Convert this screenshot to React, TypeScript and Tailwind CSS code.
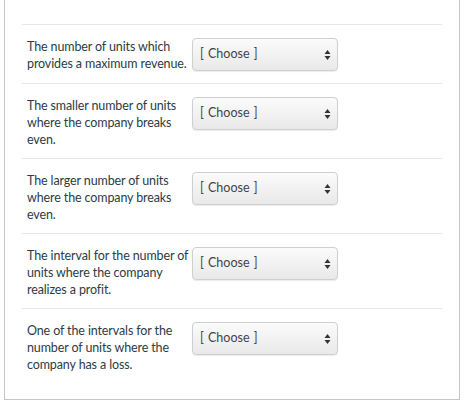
const rows = [
  "The number of units which provides a maximum revenue.",
  "The smaller number of units where the company breaks even.",
  "The larger number of units where the company breaks even.",
  "The interval for the number of units where the company realizes a profit.",
  "One of the intervals for the number of units where the company has a loss.",
];

function ChooseSelect() {
  return (
    <div className="relative mb-[2px] flex h-[33px] w-[146px] shrink-0 items-center rounded-[4px] border border-[#cfcfcf] bg-gradient-to-b from-[#fbfbfb] to-[#e9e9e9] pl-[7px] text-[12.5px] text-[#444] shadow-[0_1px_1px_rgba(0,0,0,0.08)] [word-spacing:1px]">
      <span>[ Choose ]</span>
      <svg className="absolute right-[6px] top-1/2 -translate-y-1/2" width="7" height="11" viewBox="0 0 7 11">
        <path d="M3.5 0.5 L6.5 4.5 H0.5 Z" fill="#333" />
        <path d="M3.5 10.5 L6.5 6.5 H0.5 Z" fill="#333" />
      </svg>
    </div>
  );
}

export default function App() {
  return (
    <div className="h-[403px] w-[474px] bg-white font-['Lato','Liberation_Sans',sans-serif]">
      <div className="ml-[4px] w-[456px] border-x border-b border-[#c4c8cc] px-[17px] pb-[16px] pt-[24px]">
        {rows.map((label) => (
          <div key={label} className="flex items-start gap-[1px] border-t border-[#e4e6e8] pt-[13px] pb-[10px] pl-[5px]">
            <p className="w-[164px] shrink-0 text-[12.5px] leading-[17px] tracking-[-0.12px] text-[#2d3b45]">{label}</p>
            <ChooseSelect />
          </div>
        ))}
      </div>
    </div>
  );
}
